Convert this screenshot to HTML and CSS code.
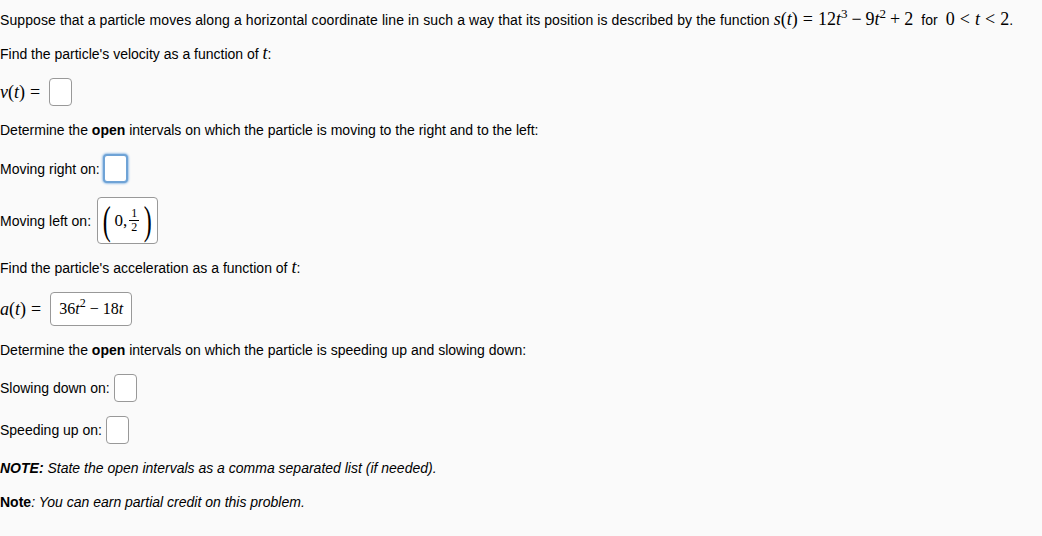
FILE: index.html
```html
<!DOCTYPE html>
<html lang="en">

<head>
    <meta charset="UTF-8">
    <meta name="viewport" content="width=device-width, initial-scale=1.0">
    <title>Particle Motion</title>
    <link rel="stylesheet" href="styles.css">
</head>

<body>
    <div class="problem">
        <p class="row intro">Suppose that a particle moves along a horizontal coordinate line in such a way that its position is described by the function <span class="math"><i>s</i>(<i>t</i>)<span class="op">=</span>12<i>t</i><sup>3</sup><span class="op bin">&minus;</span>9<i>t</i><sup>2</sup><span class="op bin">+</span>2</span>&nbsp; for &nbsp;<span class="math">0<span class="op">&lt;</span><i>t</i><span class="op">&lt;</span>2</span>.</p>

        <p class="row">Find the particle's velocity as a function of <span class="math"><i>t</i></span>:</p>

        <div class="row row-box">
            <span class="math"><i>v</i>(<i>t</i>)<span class="op">=</span></span>
            <span class="answer answer-empty"></span>
        </div>

        <p class="row">Determine the <b>open</b> intervals on which the particle is moving to the right and to the left:</p>

        <div class="row row-box">
            <span>Moving right on:</span>
            <span class="answer answer-empty answer-focus"></span>
        </div>

        <div class="row row-box">
            <span>Moving left on:</span>
            <span class="answer answer-tall">
                <span class="math paren">(</span>
                <span class="math">0,</span>
                <span class="frac"><span class="num">1</span><span class="den">2</span></span>
                <span class="math paren">)</span>
            </span>
        </div>

        <p class="row">Find the particle's acceleration as a function of <span class="math"><i>t</i></span>:</p>

        <div class="row row-box">
            <span class="math"><i>a</i>(<i>t</i>)<span class="op">=</span></span>
            <span class="answer answer-filled"><span class="math">36<i>t</i><sup>2</sup><span class="op bin">&minus;</span>18<i>t</i></span></span>
        </div>

        <p class="row">Determine the <b>open</b> intervals on which the particle is speeding up and slowing down:</p>

        <div class="row row-box">
            <span>Slowing down on:</span>
            <span class="answer answer-empty"></span>
        </div>

        <div class="row row-box">
            <span>Speeding up on:</span>
            <span class="answer answer-empty"></span>
        </div>

        <p class="row note"><b>NOTE:</b> State the open intervals as a comma separated list (if needed).</p>

        <p class="row note"><b class="upright">Note</b>: You can earn partial credit on this problem.</p>
    </div>
</body>

</html>
```

FILE: styles.css
```css
html,
body {
    background-color: #fafafa;
}

body {
    margin: 0;
    padding-top: 10px;
    font-family: "Liberation Sans", Arial, sans-serif;
    font-size: 14px;
    color: #000;
}

.problem {
    display: flex;
    flex-direction: column;
    gap: 14px;
}

.row {
    margin: 0;
    height: 20px;
    line-height: 20px;
    white-space: nowrap;
}

.intro {
    letter-spacing: 0.1px;
}

.row-box {
    display: flex;
    align-items: center;
    height: auto;
}

.math {
    font-family: "Liberation Serif", "DejaVu Serif", serif;
    font-size: 18px;
    letter-spacing: 0;
}

p.row .math {
    line-height: 0;
}

.math sup {
    font-size: 13px;
    line-height: 0;
    vertical-align: 7px;
}

.op {
    margin: 0 5px;
}

.op.bin {
    margin: 0 4px;
}

.answer {
    display: inline-flex;
    align-items: center;
    margin-left: 4px;
    background-color: #fff;
    border: 1px solid #999;
    border-radius: 4px;
    box-sizing: border-box;
}

.answer-empty {
    width: 23px;
    height: 28px;
}

.answer-focus {
    width: 25px;
    height: 29px;
    margin-left: 3px;
    border: 2px solid #6fa3d6;
    box-shadow: 0 0 2px 1px #9cc2e8;
}

.answer-filled {
    height: 34px;
    padding: 0 8px;
}

.answer-filled .math {
    font-size: 16px;
}

.answer-filled .math sup {
    font-size: 12px;
}

.answer-tall {
    height: 47px;
    margin-left: 6px;
    padding: 0 3px 0 2px;
    gap: 1px;
}

.answer-tall .math {
    font-size: 17px;
}

.answer-tall .paren {
    font-size: 40px;
    font-weight: 100;
    line-height: 44px;
    transform: scaleX(0.6);
}

.frac {
    display: inline-flex;
    flex-direction: column;
    align-items: center;
    font-family: "Liberation Serif", "DejaVu Serif", serif;
    font-size: 12px;
    line-height: 13px;
    margin: 0 1px;
}

.frac .num {
    border-bottom: 1px solid #000;
    padding: 0 2px;
}

.note {
    font-style: italic;
}

.note .upright {
    font-style: normal;
}
```
